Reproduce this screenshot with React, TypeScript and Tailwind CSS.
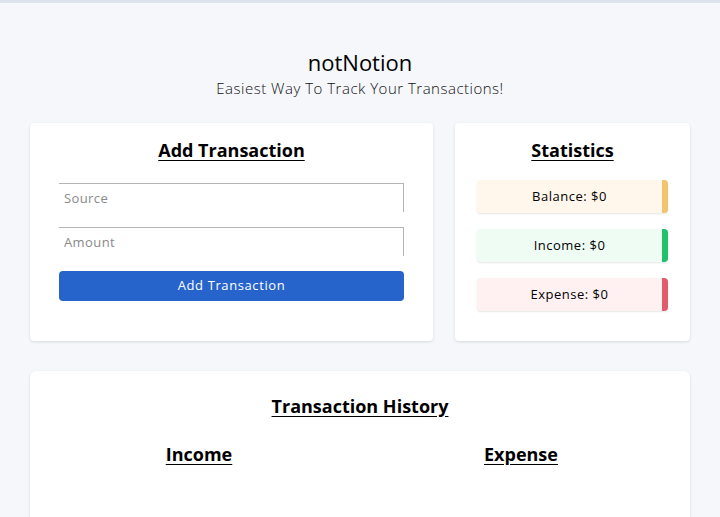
export default function App() {
  const stats = [
    { label: 'Balance: $0', bg: 'bg-[#fff7ec]', bar: 'border-[#f2c46d]' },
    { label: 'Income: $0', bg: 'bg-[#effcf3]', bar: 'border-[#1fc16b]' },
    { label: 'Expense: $0', bg: 'bg-[#fff1f1]', bar: 'border-[#e25b6b]' },
  ];

  return (
    <main
      className="min-h-screen bg-[#f5f7fb] border-t-[3px] border-[#dde4ee] text-black"
      style={{ fontFamily: '"Open Sans", "Noto Sans", sans-serif' }}
    >
      <div className="pt-[44px] text-center">
        <h1 className="text-[22px] leading-[30px] font-medium">notNotion</h1>
        <p className="text-[15px] leading-[20px] font-light tracking-[0.5px] mt-[1px] text-[#111]">
          Easiest Way To Track Your Transactions!
        </p>
      </div>

      <div className="px-[30px] mt-[25px]">
        <div className="flex gap-[22px]">
          {/* Add Transaction */}
          <section className="w-[403px] h-[218px] bg-white rounded shadow-[0_1px_3px_rgba(0,0,0,0.12)] px-[29px] pt-[16px]">
            <h2 className="text-center text-[18px] leading-[22px] font-bold underline underline-offset-[3px]">
              Add Transaction
            </h2>
            <div className="mt-[22px] flex flex-col gap-[15px]">
              <input
                placeholder="Source"
                className="h-[29px] w-full border-t border-r border-[#b5b5b5] px-[5px] text-[13px] tracking-[0.4px] placeholder-[#8a8a8a] outline-none"
              />
              <input
                placeholder="Amount"
                className="h-[29px] w-full border-t border-r border-[#b5b5b5] px-[5px] text-[13px] tracking-[0.4px] placeholder-[#8a8a8a] outline-none"
              />
            </div>
            <button className="mt-[15px] w-full h-[30px] rounded bg-[#2664cc] text-white text-[13px] tracking-[0.6px]">
              Add Transaction
            </button>
          </section>

          {/* Statistics */}
          <section className="w-[235px] h-[218px] bg-white rounded shadow-[0_1px_3px_rgba(0,0,0,0.12)] px-[22px] pt-[16px]">
            <h2 className="text-center text-[18px] leading-[22px] font-bold underline underline-offset-[3px]">
              Statistics
            </h2>
            <div className="mt-[19px] flex flex-col gap-[16px]">
              {stats.map((s) => (
                <div
                  key={s.label}
                  className={`h-[33px] flex items-center justify-center rounded-sm border-r-[6px] ${s.bar} ${s.bg} shadow-[0_1px_2px_rgba(0,0,0,0.1)] text-[13px] tracking-[0.5px]`}
                >
                  {s.label}
                </div>
              ))}
            </div>
          </section>
        </div>

        {/* Transaction History */}
        <section className="mt-[30px] h-[160px] bg-white rounded-md shadow-[0_1px_3px_rgba(0,0,0,0.12)] px-[8px] pt-[23px]">
          <h2 className="text-center text-[18px] leading-[24px] font-bold underline underline-offset-[3px]">
            Transaction History
          </h2>
          <div className="grid grid-cols-2 mt-[24px]">
            <h3 className="text-center text-[18px] leading-[24px] font-bold underline underline-offset-[3px]">
              Income
            </h3>
            <h3 className="text-center text-[18px] leading-[24px] font-bold underline underline-offset-[3px]">
              Expense
            </h3>
          </div>
        </section>
      </div>
    </main>
  );
}
